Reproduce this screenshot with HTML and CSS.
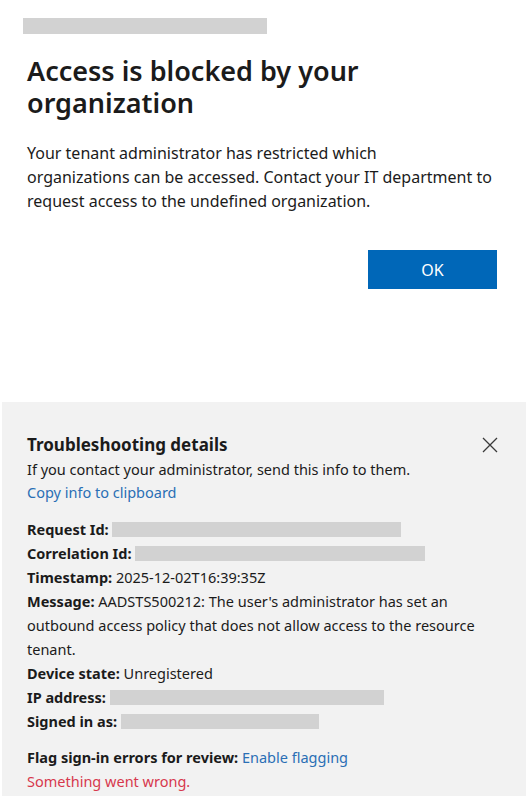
FILE: index.html
```html
<!DOCTYPE html>
<html>
<head>
<meta charset="utf-8">
<link rel="stylesheet" href="styles.css">
</head>
<body>
<div class="main">
  <div class="redact-top"></div>
  <h1 class="title">Access is blocked by your organization</h1>
  <p class="desc">Your tenant administrator has restricted which<br>organizations can be accessed. Contact your IT department to request access to the undefined organization.</p>
  <div class="actions"><button class="ok">OK</button></div>
</div>
<div class="panel">
  <div class="panel-head">
    <div class="panel-title">Troubleshooting details</div>
    <svg class="close" width="16" height="16" viewBox="0 0 16 16"><path d="M1 1L15 15M15 1L1 15" stroke="#3a3a3a" stroke-width="1.3" fill="none"/></svg>
  </div>
  <div class="panel-sub">If you contact your administrator, send this info to them.</div>
  <div class="link">Copy info to clipboard</div>
  <div class="details">
    <div class="row"><b>Request Id:</b> <span class="redact" style="width:289px"></span></div>
    <div class="row"><b>Correlation Id:</b> <span class="redact" style="width:290px"></span></div>
    <div class="row"><b>Timestamp:</b> 2025-12-02T16:39:35Z</div>
    <div class="row"><b>Message:</b> AADSTS500212: The user's administrator has set an outbound access policy that does not allow access to the resource tenant.</div>
    <div class="row"><b>Device state:</b> Unregistered</div>
    <div class="row"><b>IP address:</b> <span class="redact" style="width:274px"></span></div>
    <div class="row"><b>Signed in as:</b> <span class="redact" style="width:198px"></span></div>
  </div>
  <div class="flag"><b>Flag sign-in errors for review:</b> <span class="link-inline">Enable flagging</span></div>
  <div class="error">Something went wrong.</div>
</div>
</body>
</html>
```
FILE: styles.css
```css
html, body {
  margin: 0;
  padding: 0;
  background: #ffffff;
}
body {
  font-family: "Noto Sans", "Open Sans", sans-serif;
  color: #1b1b1b;
  width: 526px;
  height: 800px;
  overflow: hidden;
}
.main {
  padding: 18px 29px 0 27px;
}
.redact-top {
  width: 244px;
  height: 16px;
  background: #d2d2d2;
  margin-left: -4px;
}
.title {
  font-size: 27px;
  font-weight: 600;
  line-height: 32px;
  margin: 21px 0 0 0;
  width: 400px;
}
.desc {
  font-size: 16px;
  line-height: 24px;
  margin: 22px 0 0 0;
}
.actions {
  display: flex;
  justify-content: flex-end;
  margin-top: 37px;
}
.ok {
  width: 129px;
  height: 39px;
  background: #0067b8;
  color: #ffffff;
  border: none;
  font-family: inherit;
  font-size: 16px;
  padding: 0;
}
.panel {
  margin: 113px 0 0 2px;
  background: #f2f2f2;
  padding: 31px 28px 20px 25px;
  height: 394px;
  box-sizing: border-box;
}
.panel-head {
  display: flex;
  justify-content: space-between;
  align-items: center;
}
.panel-title {
  font-size: 17px;
  font-weight: 700;
  line-height: 24px;
}
.panel-sub, .link {
  font-size: 14.5px;
  line-height: 23px;
}
.panel-sub {
  margin-top: 1px;
}
.link, .link-inline {
  color: #2a6fb5;
}
.details {
  margin-top: 13px;
  font-size: 14.5px;
  line-height: 24px;
}
.row b, .flag b {
  font-weight: 700;
}
.redact {
  display: inline-block;
  height: 15px;
  background: #d2d2d2;
  vertical-align: -2px;
}
.flag {
  margin-top: 12px;
  font-size: 14.5px;
  line-height: 24px;
}
.error {
  font-size: 14.5px;
  line-height: 24px;
  color: #d7384d;
}
```
